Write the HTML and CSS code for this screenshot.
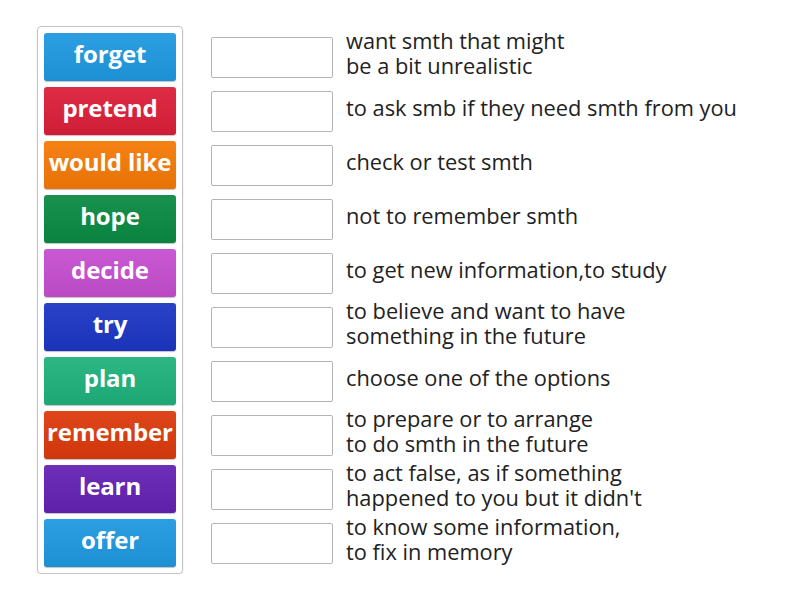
FILE: index.html
```html
<!DOCTYPE html>
<html>
<head>
<meta charset="utf-8">
<link rel="stylesheet" href="styles.css">
</head>
<body>
<div class="game">
  <div class="bank">
    <div class="tile c-blue">forget</div>
    <div class="tile c-red">pretend</div>
    <div class="tile c-orange">would like</div>
    <div class="tile c-green">hope</div>
    <div class="tile c-magenta">decide</div>
    <div class="tile c-navy">try</div>
    <div class="tile c-teal">plan</div>
    <div class="tile c-rust">remember</div>
    <div class="tile c-purple">learn</div>
    <div class="tile c-blue">offer</div>
  </div>
  <div class="targets">
    <div class="row"><div class="slot"></div><div class="def">want smth that might<br>be a bit unrealistic</div></div>
    <div class="row"><div class="slot"></div><div class="def">to ask smb if they need smth from you</div></div>
    <div class="row"><div class="slot"></div><div class="def">check or test smth</div></div>
    <div class="row"><div class="slot"></div><div class="def">not to remember smth</div></div>
    <div class="row"><div class="slot"></div><div class="def">to get new information,to study</div></div>
    <div class="row"><div class="slot"></div><div class="def">to believe and want to have<br>something in the future</div></div>
    <div class="row"><div class="slot"></div><div class="def">choose one of the options</div></div>
    <div class="row"><div class="slot"></div><div class="def">to prepare or to arrange<br>to do smth in the future</div></div>
    <div class="row"><div class="slot"></div><div class="def">to act false, as if something<br>happened to you but it didn't</div></div>
    <div class="row"><div class="slot"></div><div class="def">to know some information,<br>to fix in memory</div></div>
  </div>
</div>
</body>
</html>
```
FILE: styles.css
```css
html, body {
  margin: 0;
  padding: 0;
  background: #ffffff;
}
body {
  font-family: "Open Sans", "Liberation Sans", sans-serif;
}
.game {
  display: flex;
  align-items: flex-start;
  padding: 26px 0 0 37px;
}
.bank {
  width: 132px;
  border: 1px solid #c4c4c4;
  border-radius: 4px;
  padding: 6px;
  display: flex;
  flex-direction: column;
  gap: 6px;
  box-shadow: 0 1px 2px rgba(0,0,0,0.12);
}
.tile {
  height: 48px;
  box-sizing: border-box;
  padding-bottom: 7px;
  border-radius: 3px;
  display: flex;
  align-items: center;
  justify-content: center;
  color: #ffffff;
  font-weight: 700;
  font-size: 24px;
  letter-spacing: -0.1px;
  white-space: nowrap;
  box-shadow: 0 1px 1px rgba(0,0,0,0.25);
  background-image: linear-gradient(to bottom, rgba(255,255,255,0.06), rgba(0,0,0,0.06));
}
.c-blue { background-color: #1f98e0; }
.c-red { background-color: #dc1f3a; }
.c-orange { background-color: #f57a06; }
.c-green { background-color: #0a8a44; }
.c-magenta { background-color: #c64ed0; }
.c-navy { background-color: #1c36c4; }
.c-teal { background-color: #1eb27c; }
.c-rust { background-color: #dc3a0c; }
.c-purple { background-color: #6422b4; }
.targets {
  margin-left: 28px;
  padding-top: 7px;
  display: flex;
  flex-direction: column;
  gap: 6px;
}
.row {
  height: 48px;
  display: flex;
  align-items: center;
}
.slot {
  width: 120px;
  height: 39px;
  border: 1px solid #b4b4b4;
  border-radius: 2px;
  background: #ffffff;
  flex: none;
}
.def {
  margin-left: 13px;
  padding-bottom: 8px;
  font-size: 21.8px;
  line-height: 25px;
  color: #222222;
  white-space: nowrap;
}
```
